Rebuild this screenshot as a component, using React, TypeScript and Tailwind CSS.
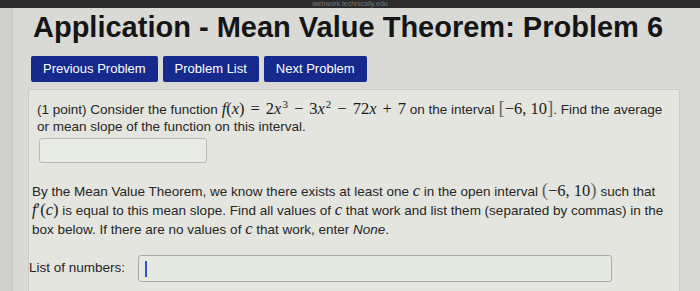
import React from "react";

// ─── Small math helpers (MathJax-like serif) ──────────────────────────────────
function V({ children }: { children: React.ReactNode }) {
  return <span className="italic">{children}</span>;
}

function M({ children }: { children: React.ReactNode }) {
  return (
    <span className="whitespace-nowrap font-['Liberation_Serif',serif] text-[16.5px] leading-[14px] text-[#1b1b1b]">
      {children}
    </span>
  );
}

function Op({ children }: { children: React.ReactNode }) {
  return <span className="mx-[6px]">{children}</span>;
}

function Sup({ children }: { children: React.ReactNode }) {
  return <span className="text-[11px] align-[6px] leading-[10px] ml-[1px]">{children}</span>;
}

function Br({ children }: { children: React.ReactNode }) {
  return <span className="text-[19px] leading-[14px] text-[#666]">{children}</span>;
}

const NAV = ["Previous Problem", "Problem List", "Next Problem"];

export default function App() {
  return (
    <div className="w-[700px] h-[291px] overflow-hidden bg-[#d9d9d5] font-['Liberation_Sans',Arial,sans-serif] text-[#262626]">
      {/* browser bar */}
      <div className="h-[8px] bg-[#2b2b2b] flex justify-center overflow-hidden">
        <span className="text-[7px] leading-[8px] text-[#7a7a7a]">webwork.technically.edu</span>
      </div>

      <div className="flex h-[283px]">
        <div className="w-[13px] bg-[#cfcfcb] border-r border-[#c4c4c0]" />

        <div className="flex-1 pl-[15px] pr-[20px]">
          <h1 className="pt-[2px] pl-[5px] text-[29px] leading-[34px] font-bold text-[#151515]">
            Application - Mean Value Theorem: Problem 6
          </h1>

          <div className="flex gap-[5px] mt-[12px] pl-[3px]">
            {NAV.map((label) => (
              <button
                key={label}
                className="h-[26px] px-[12px] bg-[#16298c] text-white text-[13px] rounded-[2px]"
              >
                {label}
              </button>
            ))}
          </div>

          {/* problem card */}
          <div className="mt-[7px] h-[210px] bg-[#e3e5de] border border-[#c9cac4] rounded-[2px] pl-[8px] pr-[14px] pt-[9px]">
            <p className="text-[13.5px] leading-[17px]">
              (1 point) Consider the function{" "}
              <M>
                <V>f</V>(<V>x</V>)<Op>=</Op>2<V>x</V>
                <Sup>3</Sup>
                <Op>−</Op>3<V>x</V>
                <Sup>2</Sup>
                <Op>−</Op>72<V>x</V>
                <Op>+</Op>7
              </M>{" "}
              on the interval{" "}
              <M>
                <Br>[</Br>−6, 10<Br>]</Br>
              </M>
              . Find the average or mean slope of the function on this interval.
            </p>
            <div className="mt-[3px] ml-[2px] w-[168px] h-[25px] bg-[#e8eae4] border border-[#b9bab5] rounded-[3px]" />

            <p className="mt-[19px] -ml-[5px] text-[13.5px] leading-[19px]">
              By the Mean Value Theorem, we know there exists at least one{" "}
              <M>
                <V>c</V>
              </M>{" "}
              in the open interval{" "}
              <M>
                <Br>(</Br>−6, 10<Br>)</Br>
              </M>{" "}
              such that{" "}
              <M>
                <V>f</V>′(<V>c</V>)
              </M>{" "}
              is equal to this mean slope. Find all values of{" "}
              <M>
                <V>c</V>
              </M>{" "}
              that work and list them (separated by commas) in the box below. If there are no values of{" "}
              <M>
                <V>c</V>
              </M>{" "}
              that work, enter <span className="italic">None</span>.
            </p>

            <div className="mt-[16px] -ml-[8px] flex items-center gap-[13px]">
              <span className="text-[13.5px]">List of numbers:</span>
              <div className="w-[474px] h-[27px] bg-[#e6e8e2] border border-[#a9aaa5] rounded-[3px] flex items-center pl-[6px]">
                <div className="w-[2px] h-[16px] bg-[#2a55d8]" />
              </div>
            </div>
          </div>
        </div>
      </div>
    </div>
  );
}
